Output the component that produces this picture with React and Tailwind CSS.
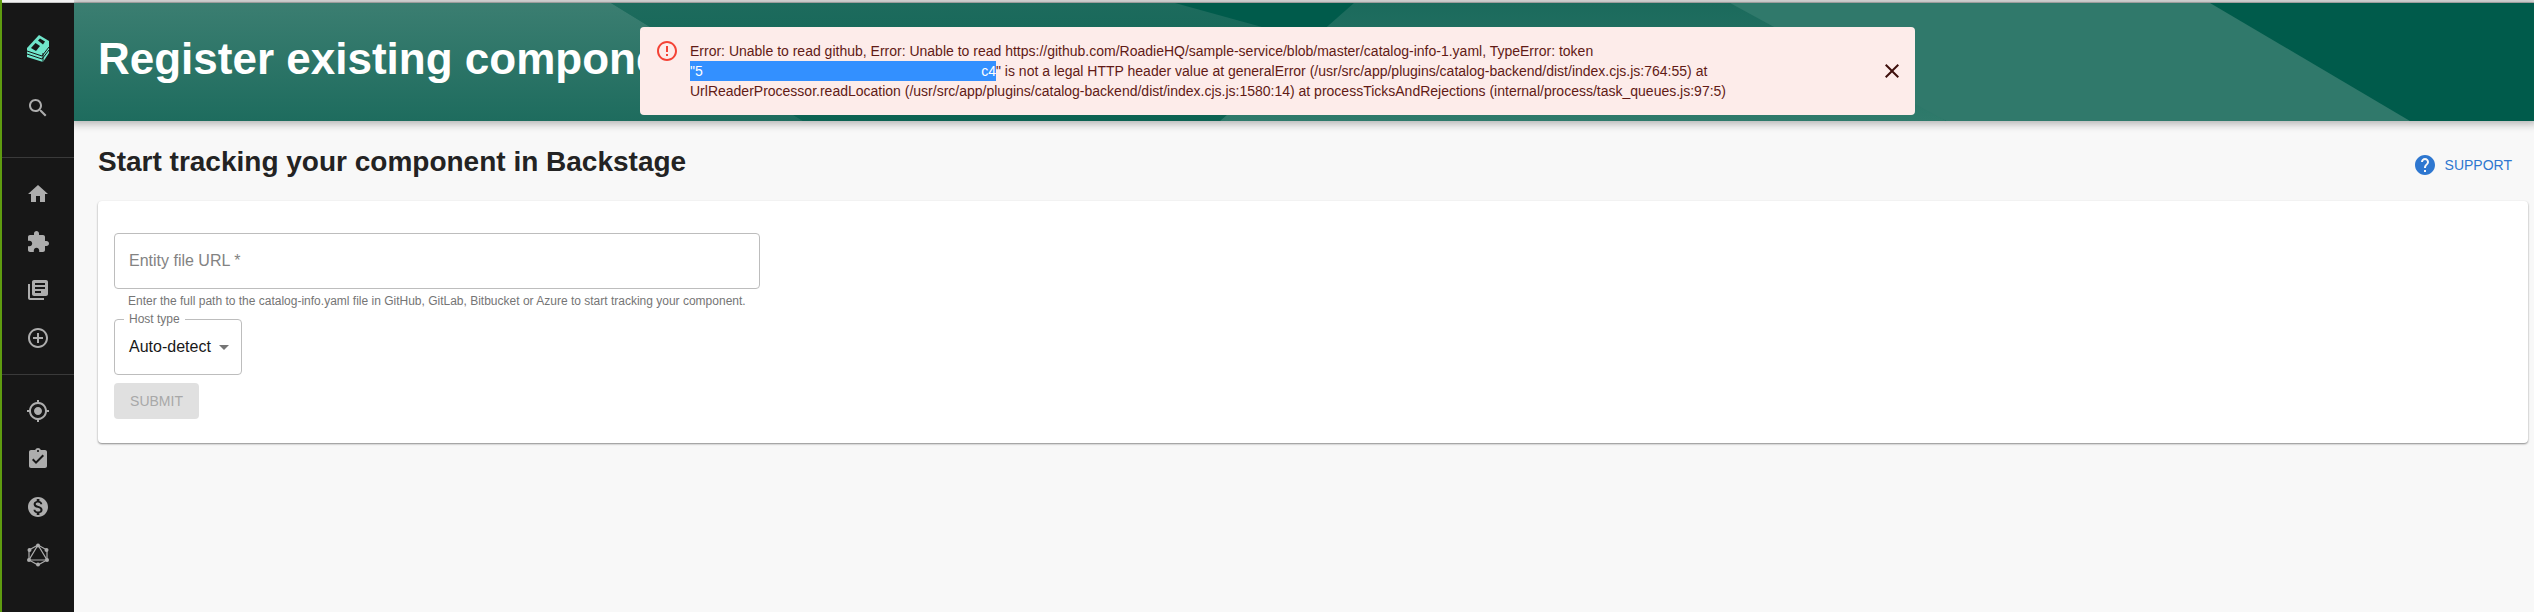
const Icon = ({ d, size = 24, children }) => (
  <svg width={size} height={size} viewBox="0 0 24 24" fill="currentColor">
    {d && <path d={d} />}
    {children}
  </svg>
)

const Logo = () => (
  <svg width="22" height="27" viewBox="0 0 22 27">
    <path d="M0 13 L12 0 L22 6 V18 L16 27 L0 22 Z" fill="#70e5cb" />
    <g fill="#171717">
      <path d="M11 5.5 L13 3.5 L18 6.5 L16 9.5 Z" />
      <path d="M4 13 L8.5 8 L13 11 L9 16 Z" />
    </g>
    <g fill="none" stroke="#171717" strokeWidth="1">
      <path d="M0 16 L15 21 L22 12" />
      <path d="M0 19 L15 24 L22 15" />
      <path d="M16 18 V27" />
    </g>
  </svg>
)

const SideItem = ({ children }) => (
  <div className="flex h-12 items-center justify-center text-[#adadad]">{children}</div>
)

const TopStrip = () => <div className="h-[3px] shrink-0 border-b border-[#c4c4c4] bg-[#f2f2f2]" />

const Sidebar = () => (
  <div className="relative z-10 flex w-[74px] shrink-0 flex-col border-l-2 border-[#5f9c10] bg-[#171717]">
    <TopStrip />
    <div className="flex h-[90px] items-center justify-center">
      <Logo />
    </div>
    <div className="flex h-[64px] items-start justify-center pt-[3px] text-[#adadad]">
      <Icon d="M15.5 14h-.79l-.28-.27C15.41 12.59 16 11.11 16 9.5 16 5.91 13.09 3 9.5 3S3 5.91 3 9.5 5.91 16 9.5 16c1.61 0 3.09-.59 4.23-1.57l.27.28v.79l5 4.99L20.49 19l-4.99-5zm-6 0C7.01 14 5 11.99 5 9.5S7.01 5 9.5 5 14 7.01 14 9.5 11.99 14 9.5 14z" />
    </div>
    <div className="h-px bg-[#3a3a3a]" />
    <div className="py-[12px]">
      <SideItem><Icon d="M10 20v-6h4v6h5v-8h3L12 3 2 12h3v8z" /></SideItem>
      <SideItem><Icon d="M20.5 11H19V7c0-1.1-.9-2-2-2h-4V3.5C13 2.12 11.88 1 10.5 1S8 2.12 8 3.5V5H4c-1.1 0-1.99.9-1.99 2v3.8H3.5c1.49 0 2.7 1.21 2.7 2.7s-1.21 2.7-2.7 2.7H2V20c0 1.1.9 2 2 2h3.8v-1.5c0-1.49 1.21-2.7 2.7-2.7 1.49 0 2.7 1.21 2.7 2.7V22H17c1.1 0 2-.9 2-2v-4h1.5c1.38 0 2.5-1.12 2.5-2.5S21.88 11 20.5 11z" /></SideItem>
      <SideItem><Icon d="M4 6H2v14c0 1.1.9 2 2 2h14v-2H4V6zm16-4H8c-1.1 0-2 .9-2 2v12c0 1.1.9 2 2 2h12c1.1 0 2-.9 2-2V4c0-1.1-.9-2-2-2zm-1 9H9V9h10v2zm-4 4H9v-2h6v2zm4-8H9V5h10v2z" /></SideItem>
      <SideItem><Icon d="M13 7h-2v4H7v2h4v4h2v-4h4v-2h-4V7zm-1-5C6.48 2 2 6.48 2 12s4.48 10 10 10 10-4.48 10-10S17.52 2 12 2zm0 18c-4.41 0-8-3.59-8-8s3.59-8 8-8 8 3.59 8 8-3.59 8-8 8z" /></SideItem>
    </div>
    <div className="h-px bg-[#3a3a3a]" />
    <div className="pt-[12px]">
      <SideItem><Icon d="M12 8c-2.21 0-4 1.79-4 4s1.79 4 4 4 4-1.79 4-4-1.79-4-4-4zm8.94 3c-.46-4.17-3.77-7.48-7.94-7.94V1h-2v2.06C6.83 3.52 3.52 6.83 3.06 11H1v2h2.06c.46 4.17 3.77 7.48 7.94 7.94V23h2v-2.06c4.17-.46 7.48-3.77 7.94-7.94H23v-2h-2.06zM12 19c-3.87 0-7-3.13-7-7s3.13-7 7-7 7 3.13 7 7-3.13 7-7 7z" /></SideItem>
      <SideItem><Icon d="M19 3h-4.18C14.4 1.84 13.3 1 12 1c-1.3 0-2.4.84-2.82 2H5c-1.1 0-2 .9-2 2v14c0 1.1.9 2 2 2h14c1.1 0 2-.9 2-2V5c0-1.1-.9-2-2-2zm-7 0c.55 0 1 .45 1 1s-.45 1-1 1-1-.45-1-1 .45-1 1-1zm-2 14l-4-4 1.41-1.41L10 14.17l6.59-6.59L18 9l-8 8z" /></SideItem>
      <SideItem><Icon d="M12 2C6.48 2 2 6.48 2 12s4.48 10 10 10 10-4.48 10-10S17.52 2 12 2zm1.41 16.09V20h-2.67v-1.93c-1.71-.36-3.16-1.46-3.27-3.4h1.96c.1 1.05.82 1.87 2.65 1.87 1.96 0 2.4-.98 2.4-1.59 0-.83-.44-1.61-2.67-2.14-2.48-.6-4.18-1.62-4.18-3.67 0-1.72 1.39-2.84 3.11-3.21V4h2.67v1.95c1.86.45 2.79 1.86 2.85 3.39H14.3c-.05-1.11-.64-1.87-2.22-1.87-1.5 0-2.4.68-2.4 1.64 0 .84.65 1.39 2.67 1.91s4.18 1.39 4.18 3.91c-.01 1.83-1.38 2.83-3.12 3.16z" /></SideItem>
      <SideItem>
        <svg width="24" height="24" viewBox="0 0 24 24" fill="none" stroke="currentColor">
          <path d="M12 2 L21 7 V17 L12 22 L3 17 V7 Z" strokeWidth="1.2" />
          <path d="M12 2 L21 17 H3 Z" strokeWidth="1.2" />
          <g fill="currentColor" stroke="none">
            <circle cx="12" cy="2.5" r="2" />
            <circle cx="20.5" cy="7" r="2" />
            <circle cx="21" cy="17" r="2" />
            <circle cx="12" cy="21.5" r="2" />
            <circle cx="3" cy="17" r="2" />
            <circle cx="3.5" cy="7" r="2" />
          </g>
        </svg>
      </SideItem>
    </div>
  </div>
)

const Header = () => (
  <header className="relative h-[118px] shrink-0 overflow-hidden bg-[#005b4b] shadow-[0_0_8px_3px_rgba(20,20,20,0.3)]">
    {/* Backstage wave background */}
    <svg className="absolute inset-0 h-full w-full" viewBox="0 0 2460 118" preserveAspectRatio="none">
      <defs>
        <linearGradient id="light" x1="0" y1="0" x2="0" y2="1">
          <stop offset="0" stopColor="#3b7e71" />
          <stop offset="1" stopColor="#1e6c5e" />
        </linearGradient>
        <linearGradient id="mid" x1="0" y1="0" x2="0" y2="1">
          <stop offset="0" stopColor="#1d6b5d" />
          <stop offset="1" stopColor="#0c6252" />
        </linearGradient>
        <linearGradient id="right" x1="0" y1="0" x2="0" y2="1">
          <stop offset="0" stopColor="#1b6a5c" />
          <stop offset="1" stopColor="#2f7a6b" />
        </linearGradient>
      </defs>
      <polygon points="537,0 1280,0 1146,118 729,118" fill="url(#mid)" />
      <polygon points="1101,0 1280,0 1255,30 1210,30" fill="#005b4b" />
      <polygon points="1280,0 1656,0 1719,24 1840,94 1872,118 1146,118" fill="url(#right)" />
      <polygon points="1656,0 2136,0 2336,118 1872,118" fill="#30796b" />
      <polygon points="0,0 537,0 729,118 0,118" fill="url(#light)" />
    </svg>
    <h1 className="relative pl-[24px] pt-[30px] text-[44px] leading-[52px] font-bold text-white">
      Register existing component
    </h1>
  </header>
)

const ErrorAlert = () => (
  <div className="absolute left-[566px] top-[27px] flex h-[88px] w-[1275px] items-start rounded bg-[#fdecea] pl-[15px] text-[14px] leading-[20px] text-[#611a15]">
    <svg className="mt-[12px] mr-[11px] shrink-0" width="24" height="24" viewBox="0 0 24 24" fill="#f44336">
      <path d="M11 15h2v2h-2zm0-8h2v6h-2zm.99-5C6.47 2 2 6.48 2 12s4.47 10 9.99 10C17.52 22 22 17.52 22 12S17.52 2 11.99 2zM12 20c-4.42 0-8-3.58-8-8s3.58-8 8-8 8 3.58 8 8-3.58 8-8 8z" />
    </svg>
    <div className="w-[1115px] pt-[14px]">
      <div>Error: Unable to read github, Error: Unable to read https://github.com/RoadieHQ/sample-service/blob/master/catalog-info-1.yaml, TypeError: token</div>
      <div>
        <span className="inline-block w-[306px] bg-[#3390ff] align-top text-white">
          <span className="flex justify-between"><span>"5</span><span>c4</span></span>
        </span>" is not a legal HTTP header value at generalError (/usr/src/app/plugins/catalog-backend/dist/index.cjs.js:764:55) at
      </div>
      <div>UrlReaderProcessor.readLocation (/usr/src/app/plugins/catalog-backend/dist/index.cjs.js:1580:14) at processTicksAndRejections (internal/process/task_queues.js:97:5)</div>
    </div>
    <svg className="mt-[32px] ml-auto mr-[11px] shrink-0" width="24" height="24" viewBox="0 0 24 24" fill="#3f0f0c">
      <path d="M19 6.41L17.59 5 12 10.59 6.41 5 5 6.41 10.59 12 5 17.59 6.41 19 12 13.41 17.59 19 19 17.59 13.41 12z" />
    </svg>
  </div>
)

const Form = () => (
  <div className="mt-[20px] h-[242px] rounded bg-white px-[16px] pt-[32px] shadow-[0_1px_2px_rgba(0,0,0,0.45)]">
    <div className="flex h-[56px] w-[646px] items-center rounded border border-[#bdbdbd] px-[14px] text-[16px] text-[#838383]">
      Entity file URL *
    </div>
    <p className="mt-[5px] pl-[14px] text-[12px] leading-[14px] text-[#757575]">
      Enter the full path to the catalog-info.yaml file in GitHub, GitLab, Bitbucket or Azure to start tracking your component.
    </p>
    <div className="relative mt-[11px] flex h-[56px] w-[128px] items-center rounded border border-[#bdbdbd] pl-[14px] text-[16px] text-[#181818]">
      <span className="absolute -top-[8px] left-[9px] bg-white px-[5px] text-[12px] leading-[14px] text-[#757575]">Host type</span>
      Auto-detect
      <svg className="ml-[8px]" width="10" height="5" viewBox="0 0 10 5" fill="#757575"><path d="M0 0h10L5 5z" /></svg>
    </div>
    <div className="mt-[8px] flex h-[36px] w-[85px] items-center justify-center rounded bg-[#e0e0e0] text-[14px] text-[#a8a8a8]">SUBMIT</div>
  </div>
)

export default function App() {
  return (
    <div className="flex h-[612px] w-[2534px] overflow-hidden bg-[#f8f8f8] font-['Liberation_Sans',sans-serif]">
      <Sidebar />
      <div className="relative flex min-w-0 flex-1 flex-col">
        <TopStrip />
        <Header />
        <main className="pl-[24px] pr-[6px] pt-[22px]">
          <div className="flex h-[38px] items-center justify-between pr-[16px]">
            <h2 className="text-[28px] leading-[38px] font-bold text-[#232323]">Start tracking your component in Backstage</h2>
            <div className="mt-[6px] flex items-center gap-[8px] text-[14px] text-[#2e77d0]">
              <svg width="24" height="24" viewBox="0 0 24 24" fill="#2e77d0"><path d="M12 2C6.48 2 2 6.48 2 12s4.48 10 10 10 10-4.48 10-10S17.52 2 12 2zm1 17h-2v-2h2v2zm2.07-7.75l-.9.92C13.45 12.9 13 13.5 13 15h-2v-.5c0-1.1.45-2.1 1.17-2.83l1.24-1.26c.37-.36.59-.86.59-1.41 0-1.1-.9-2-2-2s-2 .9-2 2H8c0-2.21 1.79-4 4-4s4 1.79 4 4c0 .88-.36 1.68-.93 2.25z" /></svg>
              SUPPORT
            </div>
          </div>
          <Form />
        </main>
        <ErrorAlert />
      </div>
    </div>
  )
}
